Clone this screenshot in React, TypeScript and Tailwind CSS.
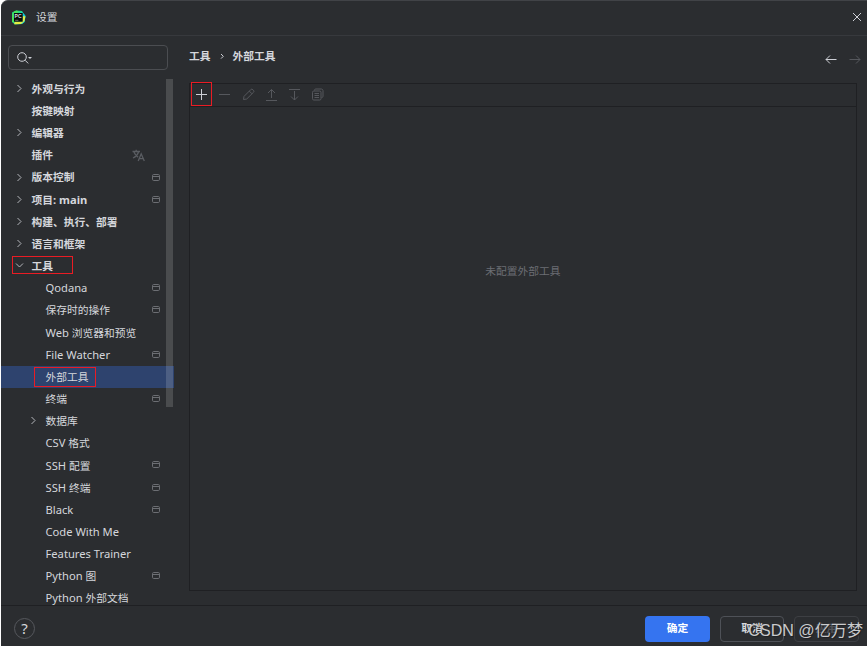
import React from 'react';

type Item = {
  label: string;
  level?: number;
  arrow?: 'right' | 'down';
  bold?: boolean;
  scoped?: boolean;
  translate?: boolean;
  selected?: boolean;
  marked?: string;
};

const items: Item[] = [
  { label: '外观与行为', arrow: 'right', bold: true },
  { label: '按键映射', bold: true },
  { label: '编辑器', arrow: 'right', bold: true },
  { label: '插件', bold: true, translate: true },
  { label: '版本控制', arrow: 'right', bold: true, scoped: true },
  { label: '项目: main', arrow: 'right', bold: true, scoped: true },
  { label: '构建、执行、部署', arrow: 'right', bold: true },
  { label: '语言和框架', arrow: 'right', bold: true },
  { label: '工具', arrow: 'down', bold: true, marked: 'left-[11px] top-[1px] h-[18px] w-[61px]' },
  { label: 'Qodana', level: 1, scoped: true },
  { label: '保存时的操作', level: 1, scoped: true },
  { label: 'Web 浏览器和预览', level: 1 },
  { label: 'File Watcher', level: 1, scoped: true },
  { label: '外部工具', level: 1, selected: true, marked: 'left-[33px] top-[1px] h-[20px] w-[62px]' },
  { label: '终端', level: 1, scoped: true },
  { label: '数据库', level: 1, arrow: 'right' },
  { label: 'CSV 格式', level: 1 },
  { label: 'SSH 配置', level: 1, scoped: true },
  { label: 'SSH 终端', level: 1, scoped: true },
  { label: 'Black', level: 1, scoped: true },
  { label: 'Code With Me', level: 1 },
  { label: 'Features Trainer', level: 1 },
  { label: 'Python 图', level: 1, scoped: true },
  { label: 'Python 外部文档', level: 1 },
];

const Chevron: React.FC<{ dir: 'right' | 'down' }> = ({ dir }) => (
  <svg width="10" height="10" viewBox="0 0 10 10" fill="none" stroke="#b4b6bb" strokeWidth="1">
    <path d={dir === 'right' ? 'M3.5 1 7 4.5 3.5 8' : 'M2 2.5 5.5 6 9 2.5'} />
  </svg>
);

const ScopeIcon = () => (
  <svg width="9" height="8" viewBox="0 0 9 8" fill="none" stroke="#6c6e73" strokeWidth="1">
    <rect x="0.5" y="0.5" width="7" height="6" rx="1.2" />
    <path d="M0.5 2.5h7" />
  </svg>
);

const TranslateIcon = () => (
  <svg width="13" height="13" viewBox="0 0 13 13" fill="none" stroke="#5a5d62" strokeWidth="1.3">
    <path d="M0.5 2.5h7.5M4.2 0.8v1.7M6.6 2.7C5.8 5.5 3.5 7.8 1 9M2 3.2c1 2.3 2.4 3.8 4.2 5" />
    <path d="M6.2 12 9.2 4.8 12.3 12M7.2 9.7h4.1" />
  </svg>
);

// Latin runs are set a little larger than the Chinese ones
const Label: React.FC<{ text: string }> = ({ text }) => (
  <span className="whitespace-pre">
    {text.split(/([\x20-\x7e]+)/).filter(Boolean).map((part, i) => (
      <span key={i} className={/^[\x20-\x7e]/.test(part) ? 'text-[11.2px]' : ''}>{part}</span>
    ))}
  </span>
);

const TreeRow: React.FC<{ item: Item }> = ({ item }) => (
  <div className={`relative flex h-[22.15px] w-[173px] shrink-0 items-center ${item.selected ? 'bg-[#2e436e]' : ''}`}>
    <div className={`flex shrink-0 items-center ${item.level ? 'w-[44.5px] pl-[27px]' : 'w-[30.5px] pl-[13px]'}`}>
      {item.arrow && <Chevron dir={item.arrow} />}
    </div>
    <div className={`flex-1 ${item.bold ? 'font-bold' : ''}`}><Label text={item.label} /></div>
    {item.translate && <div className="mr-[29px]"><TranslateIcon /></div>}
    {item.scoped && <div className="mr-[13px]"><ScopeIcon /></div>}
    {item.marked && <div className={`absolute border-[1.5px] border-[#ea1c24] ${item.marked}`} />}
  </div>
);

const Logo = () => (
  <svg width="15" height="15" viewBox="0 0 15 15">
    <path d="M1 2.5 5 0.5 11 1 13 4 14.5 6 13.5 12 11 14 4 14.5 1 12Z" fill="#21d789" />
    <path d="M10 1.5 13 4 14.5 6 13.5 12 11 14 8 14 12 9Z" fill="#11c7df" />
    <path d="M1 5 3 1.5 6 0.5 8 2 4 4 3 12 1 12Z" fill="#45e35b" />
    <path d="M3 14.3 4 11.5 11 11.5 12 6 14.3 6.5 13.5 11 10 14Z" fill="#e5ed42" />
    <rect x="3" y="3" width="8.7" height="8.7" fill="#080b0b" />
    <text x="3.6" y="7.6" fontSize="5" fontWeight="700" fontFamily="Liberation Sans, sans-serif" fill="#ddd">PC</text>
    <path d="M4.2 10.3h3.2" stroke="#999" strokeWidth="0.7" />
  </svg>
);

const Toolbar = () => (
  <div className="flex h-[23px] items-center border-b border-[#1f2023]">
    <div className="-mt-[2px] ml-px flex h-[24px] w-[21px] shrink-0 items-center justify-center border-[1.5px] border-[#ea1c24]">
      <svg width="13" height="13" viewBox="0 0 13 13" stroke="#ced0d6"><path d="M6.5 1v11M1 6.5h11" /></svg>
    </div>
    <div className="-mt-[2px] ml-[6px] flex items-center gap-[10px]">
      <svg width="13" height="13" viewBox="0 0 13 13" stroke="#56585d"><path d="M1 6.5h11" /></svg>
      <svg className="ml-px" width="13" height="13" viewBox="0 0 13 13" fill="none" stroke="#56585d">
        <path d="M1.5 11.5 2 8.4 8.7 1.7a1.5 1.5 0 0 1 2.2 0l.5.5a1.5 1.5 0 0 1 0 2.2L4.7 11 1.5 11.5ZM7.3 3.1 10 5.8" />
      </svg>
      <svg width="13" height="13" viewBox="0 0 13 13" fill="none" stroke="#56585d">
        <path d="M6.5 10V1.5M3 5l3.5-3.5L10 5M1 12.5h11" />
      </svg>
      <svg width="13" height="13" viewBox="0 0 13 13" fill="none" stroke="#56585d">
        <path d="M1 1.5h11M6.5 3v9M3 8.5 6.5 12 10 8.5" />
      </svg>
      <svg width="13" height="13" viewBox="0 0 13 13" fill="none" stroke="#56585d">
        <path d="M3.5 2.5v-.3C3.5 1.5 4 1 4.7 1h5.6c.9 0 1.7.8 1.7 1.7v5.6c0 .7-.5 1.2-1.2 1.2h-.3" />
        <rect x="1.5" y="3" width="8.5" height="9" rx="1.3" />
        <path d="M3.5 5.5H8M3.5 7.5H8M3.5 9.5H8" />
      </svg>
    </div>
  </div>
);

export default function App() {
  return (
    <div className="relative h-[646px] w-[867px] overflow-hidden bg-white pl-px font-['Noto_Sans','Noto_Sans_CJK_SC',sans-serif] text-[10.75px] leading-none text-[#d5d7dc]">
      <div className="flex h-full flex-col rounded-tl-[7px] border-t border-[#414347] bg-[#2b2d30]">
        <header className="flex h-[35px] shrink-0 items-center border-b border-[#37393d] pr-[5px] pb-[2px] pl-[10px]">
          <Logo />
          <h1 className="ml-[10px] flex-1">设置</h1>
          <svg width="10" height="10" viewBox="0 0 10 10" stroke="#ced0d6"><path d="M1 1l8 8M9 1 1 9" /></svg>
        </header>

        <div className="flex h-[569px] shrink-0">
          <aside className="flex w-[173px] shrink-0 flex-col pt-[9px]">
            <div className="ml-[7px] flex h-[25px] w-[160px] shrink-0 items-center rounded-[4px] border border-[#4b4d51] pl-[8px]">
              <svg width="16" height="14" viewBox="0 0 16 14" fill="none" stroke="#ced0d6">
                <circle cx="5" cy="6" r="4.3" />
                <path d="m8 9.2 3.2 3.2" />
                <path d="M11 6h4l-2 2Z" fill="#ced0d6" stroke="none" />
              </svg>
            </div>
            <div className="relative mt-[7px] flex min-h-0 flex-1 flex-col overflow-hidden pt-px">
              {items.map((item) => <TreeRow key={item.label} item={item} />)}
              <div className="absolute top-[2px] right-px h-[328px] w-[7px] bg-white/15" />
            </div>
          </aside>

          <main className="flex min-w-0 flex-1 flex-col pr-[10px] pb-[14px] pl-[15px]">
            <div className="flex h-[47px] shrink-0 items-center font-bold">
              <div className="flex flex-1 items-center pb-[6px]">
                <span>工具</span>
                <svg className="mr-[8px] ml-[9px]" width="5" height="7" viewBox="0 0 5 7" fill="none" stroke="#ced0d6"><path d="m1 1 2.3 2.3L1 5.6" /></svg>
                <span>外部工具</span>
              </div>
              <div className="mr-[-4px] flex gap-[12px] pb-px">
                <svg width="12" height="11" viewBox="0 0 12 11" fill="none" stroke="#ced0d6"><path d="M11.5 5.5H1M5 1.5l-4 4 4 4" /></svg>
                <svg width="12" height="11" viewBox="0 0 12 11" fill="none" stroke="#56585d"><path d="M.5 5.5H11M7 1.5l4 4-4 4" /></svg>
              </div>
            </div>
            <section className="flex flex-1 flex-col border border-[#1f2023]">
              <Toolbar />
              <div className="flex flex-1 justify-center pt-[159px] text-[#6c6e74]">未配置外部工具</div>
            </section>
          </main>
        </div>

        <footer className="flex flex-1 items-center border-t border-[#1f2023] pt-[5px] pr-[8px] pl-[13px]">
          <button className="flex h-[21px] w-[21px] items-center justify-center rounded-full border border-[#56585d] text-[15px]">?</button>
          <div className="ml-auto flex gap-[10px]">
            <button className="h-[26px] w-[65px] rounded-[4px] bg-[#3574f0] font-bold text-white">确定</button>
            <button className="h-[26px] w-[64px] rounded-[4px] border border-[#4e5157] font-bold">取消</button>
            <button className="h-[26px] w-[65px] rounded-[4px] border border-[#3d3f43] font-bold text-[#56585d]">应用</button>
          </div>
        </footer>
      </div>

      <div className="absolute right-[4px] bottom-[8px] font-['Liberation_Sans','Noto_Sans_CJK_SC',sans-serif] text-[16.1px] whitespace-nowrap text-[#c9cacc] [text-shadow:1px_1px_1px_#1f2023]">
        CSDN @亿万梦
      </div>
    </div>
  );
}
